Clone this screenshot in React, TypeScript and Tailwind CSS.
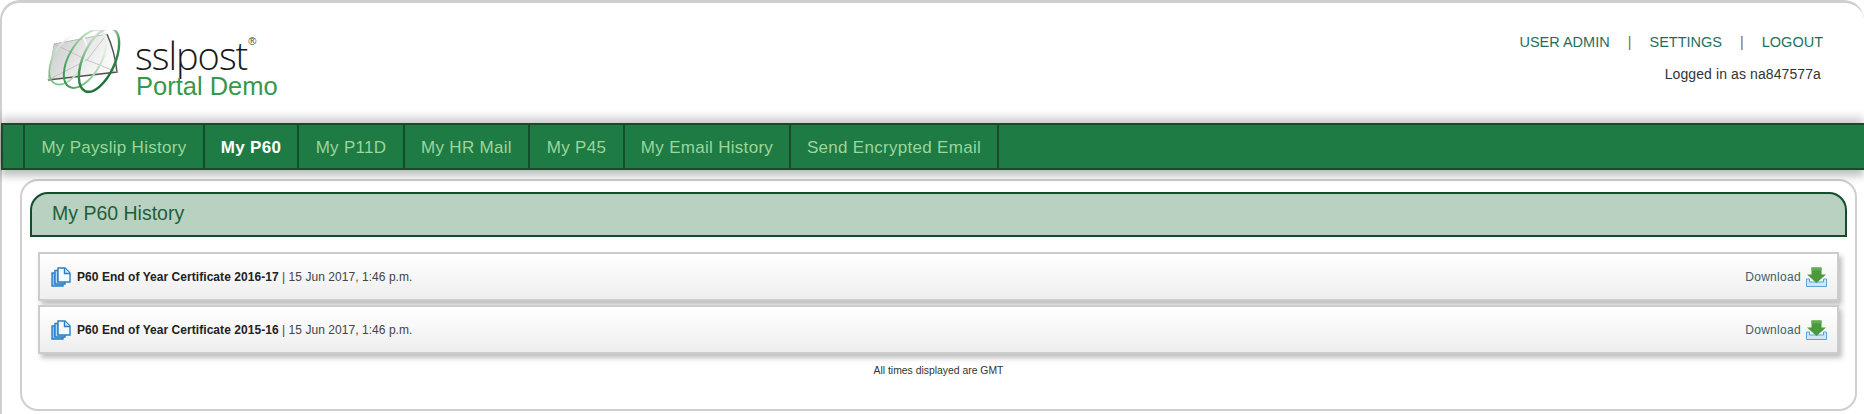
const tabs = [
  { label: "My Payslip History", w: "w-[180px]" },
  { label: "My P60", active: true, w: "w-[94px]" },
  { label: "My P11D", w: "w-[106px]" },
  { label: "My HR Mail", w: "w-[125px]" },
  { label: "My P45", w: "w-[95px]" },
  { label: "My Email History", w: "w-[166px]" },
  { label: "Send Encrypted Email", w: "w-[210px]" },
];

const certificates = [
  { name: "P60 End of Year Certificate 2016-17", date: "15 Jun 2017, 1:46 p.m." },
  { name: "P60 End of Year Certificate 2015-16", date: "15 Jun 2017, 1:46 p.m." },
];

function Logo() {
  return (
    <svg width="84" height="66" viewBox="0 0 84 66" className="shrink-0">
      <defs>
        <linearGradient id="flap" x1="0" y1="0" x2="1" y2="0.4">
          <stop offset="0" stopColor="#c4c4c4" />
          <stop offset="0.55" stopColor="#e6e6e6" />
          <stop offset="1" stopColor="#fbfbfb" />
        </linearGradient>
        <linearGradient id="ringA" x1="0.5" y1="0" x2="0.3" y2="1">
          <stop offset="0" stopColor="#ffffff" />
          <stop offset="0.5" stopColor="#cfe8d3" />
          <stop offset="1" stopColor="#66bb73" />
        </linearGradient>
        <linearGradient id="ringB" x1="0.7" y1="0" x2="0.2" y2="1">
          <stop offset="0" stopColor="#eef6ef" />
          <stop offset="0.6" stopColor="#7cc387" />
          <stop offset="1" stopColor="#2c8f45" />
        </linearGradient>
        <linearGradient id="ringC" x1="0.1" y1="0" x2="0.9" y2="1">
          <stop offset="0" stopColor="#f4f4f4" />
          <stop offset="0.45" stopColor="#3f9650" />
          <stop offset="1" stopColor="#14662e" />
        </linearGradient>
      </defs>
      <path d="M11 14 L64 4 Q72 22 74 42 L5 50 Z" fill="url(#flap)" />
      <path d="M5 50 L74 42 Q72 22 64 4" fill="none" stroke="#555" strokeWidth="1.5" />
      <path d="M11 14 L5 50" fill="none" stroke="#bbb" strokeWidth="0.8" />
      <path d="M11 14 L64 4" fill="none" stroke="#aaa" strokeWidth="0.8" />
      <path d="M11 14 L44 30 L74 42 M64 4 L44 30 L5 50" fill="none" stroke="#b5b5b5" strokeWidth="0.7" />
      <ellipse cx="25" cy="30" rx="15" ry="27" transform="rotate(30 25 30)" fill="none" stroke="url(#ringA)" strokeWidth="1.6" />
      <ellipse cx="42" cy="29" rx="16" ry="32" transform="rotate(30 42 29)" fill="none" stroke="url(#ringB)" strokeWidth="2" />
      <ellipse cx="56" cy="30" rx="16" ry="34" transform="rotate(24 56 30)" fill="none" stroke="url(#ringC)" strokeWidth="2.4" />
    </svg>
  );
}

function DocsIcon() {
  return (
    <svg width="20" height="20" viewBox="0 0 20 20" className="shrink-0">
      <path d="M1 6h3v10h8v3H1z" fill="#8ec5ee" stroke="#2a7fc9" strokeWidth="1.400" />
      <path d="M4 3.500h3v11h7v2.500H4z" fill="#b5daf5" stroke="#2a7fc9" strokeWidth="1.400" />
      <path d="M7 1h7l5 5v9H7z" fill="#f4fafe" stroke="#2a7fc9" strokeWidth="1.400" />
      <path d="M13.500 1v5.500h5.500" fill="#cfe6f8" stroke="#2a7fc9" strokeWidth="1.400" />
    </svg>
  );
}

function DownloadIcon() {
  return (
    <svg width="21" height="20" viewBox="0 0 21 20" className="shrink-0">
      <path d="M0.500 12h3v3h14v-3h3v7.500h-20z" fill="#cfe6f8" stroke="#5aa5de" strokeWidth="1" />
      <path d="M5.500 0.500h10v7h4.500L10.500 16 1 7.500h4.500z" fill="#4a9a3c" />
      <path d="M5.500 0.500h10v3h-10z" fill="#62ad52" />
    </svg>
  );
}

export default function App() {
  return (
    <div className="h-[414px] overflow-hidden bg-white font-['Liberation_Sans',Arial,sans-serif]">
      <div className="h-[417px] rounded-t-[20px] border-2 border-b-0 border-t-[3px] border-[#cfcfcf] border-r-0">
        {/* Header */}
        <div className="flex h-[120px] justify-between pl-[41px] pr-[41px]">
          <div className="flex pt-[27px]">
            <Logo />
            <div className="ml-[8px] pt-[7px]">
              <div className="flex h-[36px] items-start">
                <span className="font-['Open_Sans',sans-serif] text-[38px] font-light leading-[36px] tracking-[-1px] text-[#1a1a1a]">sslpost</span>
                <span className="mt-[-1px] ml-[1px] text-[11px] leading-[11px] text-[#444]">®</span>
              </div>
              <div className="ml-[1px] text-[25.500px] leading-[26px] text-[#36984a]">Portal Demo</div>
            </div>
          </div>
          <div className="flex flex-col items-end pt-[29px]">
            <div className="flex text-[14.500px] leading-[20px] text-[#1f6f5c]">
              <span>USER ADMIN</span>
              <span className="mx-[18px] text-[#8a6a2a]">|</span>
              <span>SETTINGS</span>
              <span className="mx-[18px] text-[#8a6a2a]">|</span>
              <span>LOGOUT</span>
            </div>
            <div className="mr-[2px] mt-[12px] text-[14px] leading-[20px] tracking-[0.1px] text-[#333]">Logged in as na847577a</div>
          </div>
        </div>

        {/* Tabs */}
        <div className="relative ml-[-1px] h-[47px] border-2 border-r-0 border-[#134d2b] bg-[#1e7b43] shadow-[0_-6px_8px_rgba(0,0,0,0.18),0_6px_8px_rgba(0,0,0,0.25)]">
          <div className="flex h-full pl-[20px]">
            {tabs.map((t) => (
              <div
                key={t.label}
                className={`flex h-full shrink-0 items-center justify-center border-l-2 border-[#134d2b] pt-[2px] text-[17px] tracking-[0.3px] last:border-r-2 ${t.w} ${
                  t.active ? "font-bold text-white" : "text-[#9bd69b]"
                }`}
              >
                {t.label}
              </div>
            ))}
          </div>
        </div>

        {/* Content */}
        <div className="ml-[18px] mr-[7px] mt-[9px] h-[232px] rounded-[18px] border-2 border-[#cfcfcf] px-[8px] pt-[11px]">
          <div className="flex h-[45px] items-center rounded-t-[18px] border-2 border-[#134d2b] bg-[#b8d1c1] pb-[1px] pl-[20px] text-[19.500px] text-[#1d5f3a]">
            My P60 History
          </div>
          <div className="mx-[8px] mt-[15px] flex flex-col gap-[4px]">
            {certificates.map((c) => (
              <div
                key={c.name}
                className="flex h-[49px] items-center justify-between border-2 border-[#cccccc] bg-gradient-to-b from-white to-[#eeeeee] pl-[11px] pr-[10px] shadow-[3px_4px_5px_rgba(0,0,0,0.25)]"
              >
                <div className="flex items-center gap-[6px] text-[12px] tracking-[0.05px]">
                  <DocsIcon />
                  <span>
                    <b className="text-[#222]">{c.name}</b>
                    <span className="text-[#444]"> | {c.date}</span>
                  </span>
                </div>
                <div className="flex items-center gap-[5px] text-[12px] tracking-[0.3px] text-[#3c5f6a]">
                  <span>Download</span>
                  <DownloadIcon />
                </div>
              </div>
            ))}
          </div>
          <div className="mt-[9px] text-center text-[10.400px] text-[#333]">All times displayed are GMT</div>
        </div>
      </div>
    </div>
  );
}
